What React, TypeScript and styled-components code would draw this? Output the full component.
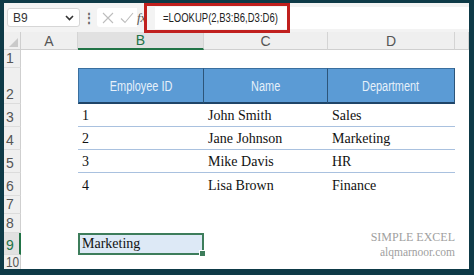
import React from 'react';
import styled, { createGlobalStyle, css } from 'styled-components';

const GlobalStyle = createGlobalStyle`
  html, body { margin: 0; padding: 0; background: #0e3a47; }
  * { box-sizing: border-box; }
`;

const SANS = `"Liberation Sans", Arial, sans-serif`;
const SERIF = `"Liberation Serif", "Times New Roman", serif`;
const GREEN = '#217346';

const Frame = styled.div`
  width: 474px;
  height: 275px;
  background: #0e3a47;
  padding: 3px 5px 6px 4px;
`;

const Window = styled.div`
  position: relative;
  height: 100%;
  background: #f3f3f3;
  overflow: hidden;
  display: flex;
  flex-direction: column;
`;

// Excel uses a narrow sans here, so squeeze Liberation Sans
const Narrow = styled.span<{ $scale?: number; $origin?: string }>`
  display: inline-block;
  white-space: nowrap;
  transform: scaleX(${(p) => p.$scale ?? 0.78});
  transform-origin: ${(p) => p.$origin ?? 'center'};
`;

const FormulaBar = styled.div`
  height: 29px;
  display: flex;
  align-items: center;
  padding-left: 3px;
  flex-shrink: 0;
`;

const NameBox = styled.div`
  width: 73px;
  height: 19px;
  background: #fff;
  border: 1px solid #d6d6d6;
  border-radius: 3px;
  display: flex;
  align-items: center;
  justify-content: space-between;
  padding: 0 5px 0 5px;
  font: 12px ${SANS};
  color: #333;
`;

const Dots = styled.div`
  width: 17px;
  text-align: center;
  color: #666;
  font: bold 12px ${SANS};
`;

const ActionBox = styled.div`
  width: 40px;
  height: 19px;
  background: #fff;
  border-radius: 3px 0 0 3px;
  display: flex;
  align-items: center;
  gap: 6px;
  padding-left: 5px;
`;

const Fx = styled.div`
  width: 12px;
  font: italic 13px ${SERIF};
  color: #555;
`;

const FormulaField = styled.div`
  flex: 1;
  height: 22px;
  margin-left: 6px;
  background: #fff;
  display: flex;
  align-items: center;
  padding-left: 8px;
  font: 12.5px ${SANS};
  color: #222;
`;

const RedMark = styled.div`
  position: absolute;
  left: 140px;
  top: 0;
  width: 146px;
  height: 30px;
  border: 3px solid #c0201e;
  pointer-events: none;
`;

const Sheet = styled.div`
  display: grid;
  grid-template-columns: 17px 57px 126px 124px 127px 1fr;
  grid-template-rows: 18px 18px 36px 23px 23px 23px 23px 18px 19px 22px 15px;
  background: #fff;
`;

const Corner = styled.div`
  background: #efefef;
  border-bottom: 1px solid #cfcfcf;
  border-right: 1px solid #cfcfcf;
  position: relative;
  &::after {
    content: '';
    position: absolute;
    right: 2px;
    bottom: 2px;
    border-style: solid;
    border-width: 0 0 9px 9px;
    border-color: transparent transparent #c9c9c9 transparent;
  }
`;

const ColHead = styled.div<{ $active?: boolean }>`
  background: ${(p) => (p.$active ? '#e1e1e1' : '#efefef')};
  border-right: 1px solid #d4d4d4;
  border-bottom: ${(p) => (p.$active ? `2px solid ${GREEN}` : '1px solid #cfcfcf')};
  display: flex;
  align-items: center;
  justify-content: center;
  font: 14px ${SANS};
  color: ${(p) => (p.$active ? GREEN : '#555')};
`;

const RowHead = styled.div<{ $active?: boolean; $tight?: boolean }>`
  grid-column: 1;
  background: ${(p) => (p.$active ? '#e1e1e1' : '#efefef')};
  border-bottom: 1px solid #dcdcdc;
  border-right: ${(p) => (p.$active ? `2px solid ${GREEN}` : '1px solid #cfcfcf')};
  display: flex;
  align-items: flex-end;
  padding: 0 0 ${(p) => (p.$tight ? 0 : 2)}px 2px;
  font: 14px ${SANS};
  color: ${(p) => (p.$active ? GREEN : '#555')};
  line-height: 14px;
`;

const Cell = styled.div`
  display: flex;
  align-items: flex-end;
  padding: 0 0 2px 4px;
  font: 14px ${SERIF};
  line-height: 16px;
  color: #111;
  white-space: nowrap;
`;

const HeadCell = styled.div<{ $first?: boolean }>`
  background: #5b9bd5;
  border-top: 1px solid #3a6f9f;
  border-bottom: 2px solid #1f4568;
  border-left: ${(p) => (p.$first ? '1px solid #3a6f9f' : 'none')};
  border-right: 1px solid #2d5579;
  display: flex;
  align-items: center;
  justify-content: center;
  font: 14px ${SANS};
  color: #e6f0fa;
`;

const DataCell = styled(Cell)<{ $line?: boolean }>`
  ${(p) =>
    p.$line &&
    css`
      border-bottom: 1px solid #a9c1df;
    `}
`;

const Selected = styled(Cell)`
  position: relative;
  background: #dde9f6;
  border: 2px solid #3d7d5b;
  padding: 0 0 1px 2px;
  &::after {
    content: '';
    position: absolute;
    right: -4px;
    bottom: -4px;
    width: 5px;
    height: 5px;
    background: #3d7d5b;
    border: 1px solid #fff;
  }
`;

const Watermark = styled.div`
  grid-column: 5;
  grid-row: 9 / span 2;
  text-align: right;
  font-family: ${SERIF};
  color: #a0a0a0;
  padding-top: 16px;
  line-height: 15px;
`;

const WmTitle = styled.div`
  font-size: 12px;
`;

const WmSite = styled.div`
  font-size: 11.5px;
`;

const rows = [
  ['1', 'John Smith', 'Sales'],
  ['2', 'Jane Johnson', 'Marketing'],
  ['3', 'Mike Davis', 'HR'],
  ['4', 'Lisa Brown', 'Finance'],
];

function Chevron() {
  return (
    <svg width="9" height="6" viewBox="0 0 9 6">
      <path d="M1 1l3.5 3.5L8 1" fill="none" stroke="#333" strokeWidth="1.6" />
    </svg>
  );
}

function Cross() {
  return (
    <svg width="12" height="12" viewBox="0 0 12 12">
      <path d="M1 1l10 10M11 1L1 11" stroke="#bdbdbd" strokeWidth="1.1" />
    </svg>
  );
}

function Check() {
  return (
    <svg width="14" height="12" viewBox="0 0 14 12">
      <path d="M1 6.5l4 4L13 1" fill="none" stroke="#bdbdbd" strokeWidth="1.1" />
    </svg>
  );
}

export default function App() {
  return (
    <Frame>
      <GlobalStyle />
      <Window>
        <FormulaBar>
          <NameBox>
            B9
            <Chevron />
          </NameBox>
          <Dots>⋮</Dots>
          <ActionBox>
            <Cross />
            <Check />
          </ActionBox>
          <Fx>fx</Fx>
          <FormulaField>
            <Narrow $scale={0.76} $origin="left">=LOOKUP(2,B3:B6,D3:D6)</Narrow>
          </FormulaField>
        </FormulaBar>
        <RedMark />
        <Sheet>
          <Corner />
          {['A', 'B', 'C', 'D'].map((c) => (
            <ColHead key={c} $active={c === 'B'}>
              {c}
            </ColHead>
          ))}
          <ColHead />

          <RowHead>1</RowHead>

          <RowHead>2</RowHead>
          <Cell />
          <HeadCell $first>
            <Narrow>Employee ID</Narrow>
          </HeadCell>
          <HeadCell>
            <Narrow>Name</Narrow>
          </HeadCell>
          <HeadCell>
            <Narrow>Department</Narrow>
          </HeadCell>

          {rows.map((r, i) => (
            <React.Fragment key={r[0]}>
              <RowHead>{i + 3}</RowHead>
              <Cell />
              {r.map((v, j) => (
                <DataCell key={j} $line={i < 3}>
                  {v}
                </DataCell>
              ))}
            </React.Fragment>
          ))}

          <RowHead>7</RowHead>
          <RowHead>8</RowHead>
          <RowHead $active>9</RowHead>
          <Cell />
          <Selected>Marketing</Selected>
          <RowHead $tight>
            <Narrow $scale={0.85} $origin="left">10</Narrow>
          </RowHead>
          <Watermark>
            <WmTitle>SIMPLE EXCEL</WmTitle>
            <WmSite>alqmarnoor.com</WmSite>
          </Watermark>
        </Sheet>
      </Window>
    </Frame>
  );
}
